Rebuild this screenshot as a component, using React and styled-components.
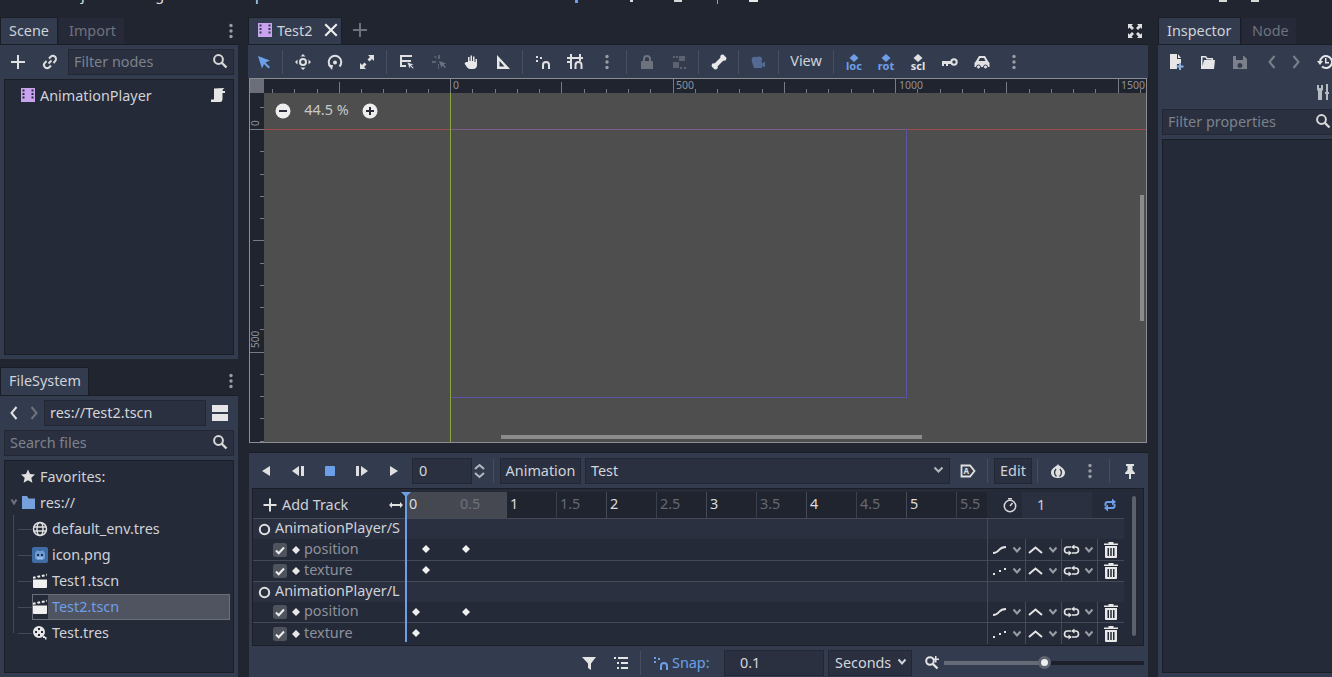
import React from 'react';
import styled, { createGlobalStyle } from 'styled-components';

const GlobalStyle = createGlobalStyle`
  html, body {
    margin: 0;
    padding: 0;
    width: 1332px;
    height: 677px;
    overflow: hidden;
    background: #212530;
    font-family: "Noto Sans", sans-serif;
    font-size: 14.4px;
    color: #d3d6db;
  }
  * { box-sizing: border-box; }
  svg { display: block; flex-shrink: 0; }
`;

const dim = '#7b808a';

/* icon set, 16x16 like the editor's own icons */
const S = ({ w = 16, h = 16, c = '#e0e0e0', children, style }) => (
  <svg width={w} height={h} viewBox={`0 0 ${w} ${h}`} fill={c} stroke="none" style={{ overflow: 'visible', ...style }}>{children}</svg>
);

const Dots = () => (
  <S c="#9a9da4"><circle cx="8" cy="2.5" r="1.7" /><circle cx="8" cy="8" r="1.7" /><circle cx="8" cy="13.5" r="1.7" /></S>
);
const Search = ({ c = '#d8d8d8' }) => (
  <S c={c}><circle cx="6.5" cy="6.5" r="4.4" fill="none" stroke={c} strokeWidth="2" /><path d="M9.5 9.5l5 5" stroke={c} strokeWidth="2.4" /></S>
);
const Plus = ({ c = '#e0e0e0', s = 14 }) => (
  <S c={c}><path d={`M${8 - s / 2} 7h${s}v2h-${s}z M7 ${8 - s / 2}h2v${s}h-2z`} /></S>
);
const Film = () => (
  <S c="#c9a3ee">
    <path fillRule="evenodd" d="M1 1h14v14H1z M2.5 2.5v2h2v-2z M2.5 6v2h2V6z M2.5 9.500v2h2v-2z M11.5 2.5v2h2v-2z M11.5 6v2h2V6z M11.5 9.5v2h2v-2z" />
  </S>
);
const Link = () => (
  <S c="none"><path d="M6.5 9.5l3-3M7 4.5l1.7-1.7a3 3 0 0 1 4.4 4.4L11.5 9M9 11.5l-1.7 1.7a3 3 0 0 1-4.4-4.4L4.5 7" stroke="#dcdcdc" strokeWidth="2" fill="none" /></S>
);
const Script = () => (
  <S c="#e6e6e6"><path d="M4 1.5L14.5 1C13 2 12.5 3 12.5 4H15v2h-2.500v6c0 2-1 3-2.500 3H1v-2.500h3z" /></S>
);
const Star = () => (
  <S c="#e0e0e0"><path d="M8 1.5l2 4.500 5 .5-3.700 3.300 1.100 5L8 12.300 3.600 14.800l1.100-5L1 6.500l5-.5z" /></S>
);
const Folder = () => (
  <S c="#76a0dc"><path d="M2 2h5l1.500 2.500H15V15H2z" /></S>
);
const Globe = () => (
  <S c="none"><g stroke="#e0e0e0" strokeWidth="1.5" fill="none"><circle cx="8" cy="8" r="6.5" /><ellipse cx="8" cy="8" rx="3" ry="6.5" /><path d="M1.5 6h13M1.5 10h13" /></g></S>
);
const PngIcon = () => (
  <S c="#3f6da3">
    <rect width="16" height="16" rx="2" />
    <path d="M4 5l1-2 1.500 1h3L11 3l1 2 1 1v5l-2 2H5l-2-2V6z" fill="#6d9bd6" />
    <rect x="5" y="7" width="2" height="2" fill="#234" /><rect x="9" y="7" width="2" height="2" fill="#234" />
    <rect x="5" y="10.5" width="6" height="1" fill="#cfe0f5" />
  </S>
);
const Scene = () => (
  <S c="#f0f0f0">
    <path d="M1 6.5h14V14a1 1 0 0 1-1 1H2a1 1 0 0 1-1-1z" />
    <path d="M1 3.8L3.200 3.300l.8 1.900-3 .6z M5 2.900l2.700-.6.8 1.900-2.700.6z M9.5 2l2.700-.6.8 1.900-2.700.6z M14 1l1-.2v2.300l-.3 .1z" />
  </S>
);
const Tres = () => (
  <S c="#e6e6e6">
    <path fillRule="evenodd" d="M7 1a6 6 0 1 0 0 12 6 6 0 0 0 0-12z M6 3h2v2H6z M3 6h2v2H3z M9 6h2v2H9z M6 9h2v2H6z" />
    <path d="M11 11h2v1h1.500v2.500H13V13h-2z" />
  </S>
);
const Cursor = () => (
  <S c="#6d9fe8"><path d="M2 2l12 4.500-4.500 2L14 13l-1.500 1.500L8 10l-2 4.500z" /></S>
);
const Move = () => (
  <S c="none"><g fill="#e0e0e0"><path d="M8 0l2.500 2.500h-5zM8 16l-2.500-2.500h5zM0 8l2.500-2.500v5zM16 8l-2.500 2.500v-5z" /></g><circle cx="8" cy="8" r="3" fill="none" stroke="#e0e0e0" strokeWidth="2" /></S>
);
const Rotate = () => (
  <S c="none"><path d="M3.5 12.5a6.300 6.300 0 1 1 9 0" stroke="#e0e0e0" strokeWidth="2" fill="none" /><circle cx="8" cy="8.5" r="2" fill="#e0e0e0" /><path d="M1 11l5 0-1 5z" fill="#e0e0e0" /></S>
);
const Scale = () => (
  <S c="#e0e0e0"><path d="M9 1h6v6l-2-2-2.500 2.500L8.500 5.500 11 3z M7 15H1V9l2 2 2.500-2.500 2 2L5 13z" /></S>
);
const ListSelect = () => (
  <S c="#e0e0e0"><path d="M1 1h12v2H3v3h9v2H3v3h4v2H1z" /><path d="M8 8l7 2.500-2.500 1L15 14l-1 1-2.500-2.500-1 2.500z" stroke="#333c4f" strokeWidth=".6" /></S>
);
const Pivot = () => (
  <S c="#5b6272"><path d="M7 1h2v4H7zM1 7h4v2H1zM7 10h1v5H7zM3 2.500l1-1 2 2-1 1z" /><path d="M8 7l7 2.500-2.500 1L15 13l-1 1-2.500-2.500-1 2.500z" fill="#6c7280" /></S>
);
const Hand = () => (
  <S c="#e8e8e8"><path d="M3 8h2V3h1.500v4h1V1.500H9V7h1V2.500h1.500V8h1V5H14v6c0 2.500-1.500 4-4 4H7c-1.500 0-2.500-1-3.500-2.500L1.500 9.500 3 8z" /></S>
);
const Ruler = () => (
  <S c="#e8e8e8"><path fillRule="evenodd" d="M2 1l13 14H2z M4.5 7v5.500h5z" /></S>
);
const SnapA = ({ c = '#e0e0e0' }) => (
  <S c={c}>
    <path d="M8 15V11a3 3 0 0 1 6 0v4" stroke={c} strokeWidth="2" fill="none" />
    <rect x="1" y="2" width="2" height="2" /><rect x="5" y="3" width="2" height="2" /><rect x="1" y="6" width="2" height="2" />
  </S>
);
const SnapGrid = () => (
  <S c="#e0e0e0"><path d="M3 0h2v3h7V0h2v3h2v2h-2v2h-2V5H5v10H3V9H0V7h3V5H0V3h3z" /><path d="M7.5 15V11a3 3 0 0 1 6 0v4" stroke="#e0e0e0" strokeWidth="2" fill="none" transform="translate(1 0)" /></S>
);
const Lock = ({ c = '#6d727d' }) => (
  <S c={c}><path d="M3 7h10a1 1 0 0 1 1 1v7H2V8a1 1 0 0 1 1-1z" /><path d="M5 7V5a3 3 0 0 1 6 0v2" stroke={c} strokeWidth="2" fill="none" /></S>
);
const GroupIcon = () => (
  <S c="#5d626e"><path d="M2 8h6v6H2zM8 2h6v5H8zM13 13h2v2h-2zM9 13h2v2H9zM2 2h2v2H2zM5 2h2v2H5z" /></S>
);
const Bone = () => (
  <S c="#e8e8e8">
    <path d="M4 12l8-8" stroke="#e8e8e8" strokeWidth="4" />
    <circle cx="11.5" cy="2.8" r="2.2" /><circle cx="13.2" cy="4.5" r="2.2" />
    <circle cx="2.8" cy="11.5" r="2.2" /><circle cx="4.5" cy="13.2" r="2.2" />
  </S>
);
const Camera = () => (
  <S c="#546a94"><circle cx="5" cy="6" r="3.3" /><circle cx="9" cy="5.5" r="3" /><path d="M2 8h10v6H4zM12 9.5l3-2v6l-3-2z" /></S>
);
const KeyTag = ({ label, c }) => (
  <S c={c}>
    <path d="M8 0l4.500 4-4.500 4-4.500-4z" />
    <text x="8" y="16" fontFamily="'Noto Sans', sans-serif" fontWeight="700" fontSize="11" textAnchor="middle" fill={c}>{label}</text>
  </S>
);
const Key = () => (
  <S c="#e0e0e0"><path d="M0 7h9v3H6v2H4v-2H2v2H0z" /><circle cx="12" cy="8" r="2.700" fill="none" stroke="#e0e0e0" strokeWidth="2" /></S>
);
const Car = () => (
  <S c="#e0e0e0"><path fillRule="evenodd" d="M5 2h6l3 5 1.500 2v4h-15V9L2 7z M6 4L4.500 7h7L10 4z" /><circle cx="4.5" cy="13" r="2" stroke="#333c4f" /><circle cx="11.5" cy="13" r="2" stroke="#333c4f" /></S>
);
const Expand = () => (
  <S c="#e0e0e0"><path d="M1 1h5L4.500 2.500 7 5 5 7 2.500 4.500 1 6zM15 1v5l-1.500-1.500L11 7 9 5l2.500-2.500L10 1zM1 15v-5l1.500 1.500L5 9l2 2-2.500 2.500L6 15zM15 15h-5l1.500-1.500L9 11l2-2 2.500 2.500L15 10z" /></S>
);
const Close = () => (
  <S c="#eeeeee"><path d="M3 1.500l5 5 5-5L14.500 3l-5 5 5 5-1.500 1.500-5-5-5 5L1.500 13l5-5-5-5z" /></S>
);
const DocPlus = () => (
  <S c="#e6e6e6"><path d="M2 0h7v5h4v5H9v5H2z M10 0l3 4h-3z" /><path d="M11 9h2v2.500h2.500v2H13V16h-2v-2.500H8.500v-2H11z" fill="#8eb1e3" /></S>
);
const OpenFolder = () => (
  <S c="#e6e6e6"><path fillRule="evenodd" d="M1 2h5l1.500 2H13v2h2l-1 9H1z M2.5 3.500V12l1.500-6h7.500V5.500H6.500L5.500 3.500z" /></S>
);
const Save = () => (
  <S c="#7b808a"><path fillRule="evenodd" d="M1 2h11l3 3v10H1z M4 2v4h7V2z M8 9a2.500 2.500 0 1 0 0 5 2.500 2.500 0 0 0 0-5z" /></S>
);
const History = () => (
  <S c="none"><path d="M3 8a6 6 0 1 1 2 4.500" stroke="#e6e6e6" strokeWidth="2" fill="none" /><path d="M0 7h6l-3 4zM8 4h1.500v4H12v1.500H8z" fill="#e6e6e6" /></S>
);
const Tools = () => (
  <S c="#b6bac1"><path d="M0 1h2v3h2V1h2v5l-1 1v2H1V7L0 6zM1 9h4v7H1zM9 0h2v8h1v2l-1 0v6H9v-6H8V8h1z" /></S>
);
const Chevron = ({ dir = 'left', c = '#e0e0e0' }) => (
  <S c="none" w={10} h={16}>
    <path d={dir === 'left' ? 'M7.5 2L2.5 8l5 6' : 'M2.5 2l5 6-5 6'} stroke={c} strokeWidth="2" fill="none" />
  </S>
);
const SplitView = () => (
  <S c="#e6e6e6"><path d="M0 0h16v7H0zM0 9h16v7H0z" /></S>
);
const Down = ({ c = '#9a9da4', w = 10 }) => (
  <S c="none" w={w} h={8}><path d={`M1.5 1.5L${w / 2} 5.5l${w / 2 - 1.5}-4`} stroke={c} strokeWidth="2" fill="none" /></S>
);
const PlayBack = () => (<S c="#e0e0e0"><path d="M12 3v10L4 8z" /></S>);
const PlayBackStep = () => (<S c="#e0e0e0"><path d="M9 3v10L2 8zM11 3h3v10h-3z" /></S>);
const Stop = () => (<S c="#6d9fe8"><rect x="3" y="3" width="10" height="10" rx="1" /></S>);
const PlayStep = () => (<S c="#e0e0e0"><path d="M7 3v10l7-5zM2 3h3v10H2z" /></S>);
const Play = () => (<S c="#e0e0e0"><path d="M4 3v10l8-5z" /></S>);
const UpDown = () => (
  <S c="none"><path d="M3 6l4.500-4 4.500 4M3 10l4.500 4 4.500-4" stroke="#b5b8bf" strokeWidth="2" fill="none" /></S>
);
const AutoTag = () => (
  <S c="none"><path d="M1.5 2.5h8.500l4.500 5.500-4.500 5.500H1.500z" stroke="#e0e0e0" strokeWidth="1.8" fill="none" /><text x="3.5" y="11" fontSize="8" fontWeight="700" fontFamily="'Noto Sans', sans-serif" fill="#e0e0e0">A</text></S>
);
const Onion = () => (
  <S c="#e0e0e0">
    <path d="M8 1c1 2.500 7 4 7 8.500S11 15 8 15 1 14 1 9.500 7 3.500 8 1z" />
    <path d="M6 6C4 8.500 4 11 6.500 13.500M10 6c2 2.500 2 5-.5 7.500" stroke="#333c4f" strokeWidth="1.3" fill="none" />
  </S>
);
const Pin = () => (
  <S c="#e0e0e0"><path d="M4 1h8v2h-1.500v4L13 10v1H3v-1l2.500-3V3H4zM7 11h2v5H7z" /></S>
);
const ResizeH = () => (
  <S c="#e0e0e0" w={14} h={8}><path d="M0 4l3-3v2h8V1l3 3-3 3V5H3v2z" /></S>
);
const Timer = () => (
  <S c="none"><circle cx="8" cy="9" r="5.7" stroke="#d8d8d8" strokeWidth="1.5" fill="none" /><path d="M8 9l2.500-3" stroke="#d8d8d8" strokeWidth="1.5" /><path d="M6 1h4v1.500H6z" fill="#d8d8d8" /></S>
);
const Loop = ({ c = '#6d9fe8' }) => (
  <S c={c}>
    <path d="M2.5 9V7a3 3 0 0 1 3-3H10V1.500L14 5l-4 3.500V6H5.500c-.6 0-1 .4-1 1v2z" />
    <path d="M13.5 7v2a3 3 0 0 1-3 3H6v2.500L2 11l4-3.500V10h4.500c.6 0 1-.4 1-1V7z" />
  </S>
);
const Check = () => (
  <S c="none" w={14} h={14}>
    <rect width="14" height="14" rx="2.5" fill="#4f535d" />
    <path d="M3 7.5l2.700 2.700L11 4.500" stroke="#eeeeee" strokeWidth="2" fill="none" />
  </S>
);
const Ring = () => (
  <S c="none" w={13} h={13}><circle cx="6.5" cy="6.5" r="4.7" stroke="#e0e0e0" strokeWidth="2" fill="none" /></S>
);
const Diamond = ({ c = '#e8e8e8' }) => (
  <S c={c} w={8} h={8}><path d="M4 0L8 4 4 8 0 4z" /></S>
);
const Linear = () => (
  <S c="none" w={15} h={10}><path d="M1 8c3 0 4-.5 6-3s4-3 7-3" stroke="#e4e4e4" strokeWidth="2" fill="none" /></S>
);
const Nearest = () => (
  <S c="#e4e4e4" w={15} h={10}><rect x="1" y="7" width="2" height="2" /><rect x="7" y="4" width="2" height="2" /><rect x="12" y="2" width="2" height="2" /></S>
);
const Caret = () => (
  <S c="none" w={15} h={10}><path d="M1 8l6.500-5.500L14 8" stroke="#e4e4e4" strokeWidth="2" fill="none" /></S>
);
const Wrap = () => (
  <S c="#e4e4e4" w={15} h={10}>
    <path d="M7 2H3.500a3 3 0 0 0 0 6H5M8 8h3.500a3 3 0 0 0 0-6H10" stroke="#e4e4e4" strokeWidth="1.6" fill="none" />
    <path d="M10.500 -.5L7 2l3.500 2.500zM4.500 5.500L8 8l-3.500 2.500z" />
  </S>
);
const Trash = () => (
  <S c="#e8e8e8"><path fillRule="evenodd" d="M5.500 0h5v1.500H15V3H1V1.500h4.500z M2 4h12v11a1 1 0 0 1-1 1H3a1 1 0 0 1-1-1z M4.500 6v8h1.500V6z M7.250 6v8h1.500V6z M10 6v8h1.500V6z" /></S>
);
const Filter = () => (
  <S c="#e4e4e4"><path d="M1 2h14L10 8.500V15l-3-2V8.500z" /></S>
);
const ListIcon = () => (
  <S c="#e4e4e4"><path d="M1 2h2v2H1zM5 2h10v2H5zM4 7h2v2H4zM8 7h7v2H8zM4 12h2v2H4zM8 12h7v2H8z" /></S>
);
const ZoomKey = () => (
  <S c="none"><circle cx="6" cy="6" r="3.8" stroke="#e4e4e4" strokeWidth="2" fill="none" /><path d="M9 9l4.500 4.500" stroke="#e4e4e4" strokeWidth="2.4" /><path d="M11 1h1.500v2.500H15V5h-2.500v2.500H11V5H9V3.500h2z" fill="#e4e4e4" /></S>
);
const CircleBtn = ({ plus }) => (
  <S c="none">
    <circle cx="8" cy="8" r="7.5" fill="#eeeeee" />
    <path d="M4 7h8v2H4z" fill="#2b2f3a" />
    {plus && <path d="M7 4h2v8H7z" fill="#2b2f3a" />}
  </S>
);
/* what peeks out of the clipped top toolbar */
const TopBits = styled.svg`
  position: absolute;
  left: 0;
  top: 0;
`;

/* shell */
const Page = styled.div`
  width: 1332px;
  height: 677px;
  display: flex;
  flex-direction: column;
  overflow: hidden;
`;
const MenuStrip = styled.div`
  height: 17px;
  flex: none;
  overflow: hidden;
  display: flex;
  align-items: flex-end;
  position: relative;
`;
const MenuInner = styled.div`
  display: flex;
  align-items: center;
  height: 32px;
  margin-bottom: 7px;
  padding-left: 4px;
  gap: 14px;
  width: 100%;
  flex: none;
  color: #e0e0e0;
`;
const Columns = styled.div`
  flex: 1;
  min-height: 0;
  display: grid;
  grid-template-columns: 238px 900px 174px;
  column-gap: 10px;
`;
const Dock = styled.div`
  display: flex;
  flex-direction: column;
  min-height: 0;
  min-width: 0;
  flex: ${p => p.$grow ? 1 : 'none'};
  height: ${p => p.$h ? p.$h + 'px' : 'auto'};
  overflow: hidden;
`;
const Stack = styled.div`
  display: flex;
  flex-direction: column;
  gap: ${p => p.$gap || 0}px;
  min-height: 0;
`;
const TabBar = styled.div`
  height: ${p => p.$h || 27}px;
  flex: none;
  display: flex;
  align-items: stretch;
  gap: 1px;
`;
const Tab = styled.div`
  padding: 0 ${p => p.$padR ?? (p.$on ? 8 : 10)}px 2px ${p => p.$on ? 8 : 10}px;
  display: flex;
  align-items: center;
  gap: 4px;
  width: ${p => p.$w}px;
  white-space: nowrap;
  background: ${p => p.$on ? '#333c4f' : '#262a38'};
  color: ${p => p.$on ? '#cfd2d8' : '#6e727d'};
  border-top: ${p => p.$on ? '1px solid #1b1e27' : '0'};
  border-left: ${p => p.$on ? '1px solid #1b1e27' : '0'};
  border-right: ${p => p.$on ? '1px solid #1b1e27' : '0'};
  margin-top: ${p => p.$on ? 0 : 1}px;
`;
const TabMenu = styled.div`
  margin-left: auto;
  align-self: center;
  margin-right: -1px;
`;
const Panel = styled.div`
  flex: 1;
  min-height: 0;
  background: #333c4f;
  border-top: 1px solid #1b1e27;
  padding: 4px;
  display: flex;
  flex-direction: column;
  gap: 4px;
`;
const Row = styled.div`
  display: flex;
  align-items: center;
  gap: ${p => p.$gap || 0}px;
  flex: none;
  height: 26px;
  padding: ${p => p.$pad || 0};
  justify-content: ${p => p.$end ? 'flex-end' : 'flex-start'};
`;
const Input = styled.div`
  flex: ${p => p.$w ? 'none' : p.$block ? 'none' : 1};
  width: ${p => p.$w ? p.$w + 'px' : 'auto'};
  height: 26px;
  background: #2a3040;
  border: 1px solid #232733;
  display: flex;
  align-items: center;
  justify-content: space-between;
  padding: 0 ${p => p.$pad || 5}px 2px;
  color: ${p => p.$muted ? '#7d828c' : '#d3d6db'};
  white-space: nowrap;
  min-width: 0;
`;
const InspectorFilter = styled(Input)`
  margin-right: -8px;
  padding-right: 4px;
`;
const InspectorTools = styled(Row)`
  width: 200px;
`;
const InspectorHelper = styled(Row)`
  margin-right: -5px;
`;
const Tree = styled.div`
  flex: 1;
  min-height: 0;
  background: #252a38;
  border: 1px solid #1b1e27;
  padding: 3px 0;
  margin-right: ${p => p.$flush ? -8 : 0}px;
  overflow: hidden;
`;
const Node = styled.div`
  height: 26px;
  display: flex;
  align-items: center;
  gap: 4px;
  padding: 0 0 2px ${p => p.$indent}px;
  color: #cfd2d8;
  white-space: nowrap;
`;
const FileRow = styled(Node)`
  position: relative;
  margin-right: 3px;
  margin-left: ${p => p.$indent}px;
  padding-left: 0;
  background: ${p => p.$sel ? '#4f5460' : 'transparent'};
  outline: ${p => p.$sel ? '1px solid #6a6e78' : '0'};
  outline-offset: -1px;
  color: ${p => p.$sel ? '#6d9fe8' : '#cfd2d8'};
  &::before {
    content: '';
    position: absolute;
    left: -14px;
    width: 14px;
    top: 13px;
    height: 1px;
    background: #454a58;
  }
`;
const FileIcon = styled.div`
  width: 16px;
  height: 24px;
  margin-bottom: -2px;
  display: flex;
  align-items: center;
  flex: none;
  background: ${p => p.$sel ? '#252a38' : 'transparent'};
`;
const FileList = styled.div`
  position: relative;
  &::before {
    content: '';
    position: absolute;
    left: 8px;
    top: -1px;
    bottom: 13px;
    width: 1px;
    background: #454a58;
  }
`;
const IconSlot = styled.div`
  width: ${p => p.$w || 16}px;
  height: 16px;
  display: flex;
  align-items: center;
  justify-content: center;
  flex: none;
  margin: ${p => p.$m || 0};
`;
const Push = styled.div`
  margin-left: auto;
  margin-right: ${p => p.$r || 0}px;
`;
const Centered = styled(Push)`
  align-self: center;
`;

/* center column */
const Center = styled.div`
  display: flex;
  flex-direction: column;
  min-height: 0;
  min-width: 0;
`;
const ViewTools = styled.div`
  height: 34px;
  flex: none;
  background: #333c4f;
  border-top: 1px solid #1b1e27;
  display: flex;
  align-items: center;
`;
const ToolBtn = styled.div`
  width: ${p => p.$w || 32}px;
  height: 24px;
  display: flex;
  align-items: center;
  justify-content: center;
  flex: none;
  color: #cfd2d8;
`;
const ViewLabel = styled.span`
  padding-bottom: 3px;
`;
const VSep = styled.div`
  width: 1px;
  height: 24px;
  margin: 0 ${p => p.$r ?? 4}px 0 ${p => p.$l ?? 3}px;
  background: #474e60;
  flex: none;
`;
const Viewport = styled.div`
  height: 365px;
  flex: none;
  margin: 0 1px;
  position: relative;
  overflow: hidden;
  background: #4e4e4e;
  border: 1px solid #8a8d93;
`;
const RulerSvg = styled.svg`
  position: absolute;
  left: 0;
  top: ${p => p.$top || 0}px;
`;
const Guide = styled.div`
  position: absolute;
  left: ${p => p.$x}px;
  top: ${p => p.$y}px;
  width: ${p => p.$w}px;
  height: ${p => p.$h}px;
  background: ${p => p.$c};
`;
const ZoomBar = styled.div`
  position: absolute;
  left: 25px;
  top: 21px;
  display: flex;
  align-items: center;
  color: #c8c8c8;
`;
const ZoomText = styled.span`
  width: 71px;
  text-align: center;
  padding-bottom: 2px;
`;
const Gap = styled.div`
  height: 9px;
  flex: none;
`;
const AnimPanel = styled.div`
  flex: 1;
  min-height: 0;
  background: #333c4f;
  border-top: 1px solid #1b1e27;
  display: flex;
  flex-direction: column;
  margin-left: 1px;
`;
const AnimBar = styled.div`
  height: 35px;
  padding: 5px 0 4px 1px;
  flex: none;
  display: flex;
  align-items: center;
`;
const Edit = styled.div`
  height: 26px;
  width: ${p => p.$w}px;
  padding: 0 0 2px;
  display: flex;
  align-items: center;
  justify-content: center;
  background: #2a3040;
  border: 1px solid #232733;
  color: #cfd2d8;
  flex: none;
  white-space: nowrap;
`;
const TrackBox = styled.div`
  height: 158px;
  flex: none;
  margin: 0 0 0 3px;
  background: #252a38;
  border: 1px solid #1b1e27;
  position: relative;
  overflow: hidden;
  padding-top: 3px;
  width: 892px;
`;
const Header = styled.div`
  height: 27px;
  width: 871px;
  display: flex;
  border-bottom: 1px solid #454a58;
`;
const HeadName = styled.div`
  width: 153px;
  flex: none;
  display: flex;
  align-items: center;
  padding: 0 0 1px 9px;
  gap: 4px;
  color: #cfd2d8;
`;
const Timeline = styled.div`
  width: 581px;
  flex: none;
  display: flex;
  position: relative;
  background: linear-gradient(to right, #454851 0, #454851 100px, #20242f 100px);
`;
const TimeMark = styled.div`
  width: 50px;
  flex: none;
  height: 100%;
  border-left: ${p => p.$first ? 0 : '1px solid #454a58'};
  padding: 0 0 3px 3px;
  display: flex;
  align-items: center;
  color: ${p => p.$half ? dim : '#dcdcdc'};
  ${p => p.$half && 'opacity: .75;'}
`;
const HeadEnd = styled.div`
  flex: 1;
  display: flex;
  align-items: center;
  padding-left: 15px;
  gap: 4px;
`;
const TimeField = styled.div`
  width: 70px;
  height: 26px;
  background: #2a3040;
  display: flex;
  align-items: center;
  padding: 0 0 2px 15px;
  margin-right: 6px;
  color: #cfd2d8;
`;
const Scroll = styled.div`
  position: absolute;
  right: 7px;
  top: 7px;
  width: 4px;
  height: 140px;
  border-radius: 2px;
  background: #5c616c;
`;
const Playhead = styled.div`
  position: absolute;
  left: 152px;
  top: 3px;
  bottom: 3px;
  width: 2px;
  background: #6d9fe8;
  &::before {
    content: '';
    position: absolute;
    top: 0;
    left: -4px;
    border: 5px solid transparent;
    border-top-color: #6d9fe8;
  }
`;
const TrackRow = styled.div`
  width: 871px;
  height: ${p => p.$h}px;
  display: flex;
  background: ${p => p.$group ? '#2b3040' : 'transparent'};
  border-bottom: ${p => p.$line ? '1px solid #454a58' : 0};
`;
const TrackName = styled.div`
  width: 153px;
  flex: none;
  display: flex;
  align-items: center;
  white-space: nowrap;
  overflow: hidden;
  padding-left: ${p => p.$group ? 5 : 20}px;
  gap: ${p => p.$group ? 4 : 5}px;
  color: ${p => p.$group ? '#cfd2d8' : '#8d919b'};
`;
const TrackLabel = styled.span`
  margin: -3px 0 0 ${p => p.$group ? 0 : -1}px;
`;
const Keys = styled.div`
  width: 581px;
  flex: none;
  position: relative;
`;
const KeyDot = styled.div`
  position: absolute;
  left: ${p => p.$x - 4}px;
  top: ${p => p.$y}px;
`;
const Controls = styled.div`
  flex: 1;
  display: flex;
  border-left: 1px solid #454a58;
`;
const Cell = styled.div`
  width: ${p => p.$w}px;
  flex: none;
  display: flex;
  align-items: center;
  justify-content: ${p => p.$center ? 'center' : 'flex-start'};
  padding-left: ${p => p.$pad || 0}px;
  gap: 5px;
  border-right: ${p => p.$line ? '1px solid #454a58' : 0};
`;
const Footer = styled.div`
  flex: 1;
  display: flex;
  align-items: center;
  padding: 3px 0 0 324px;
`;
const SnapLabel = styled.div`
  color: #6d9fe8;
  margin-left: 3px;
  padding-bottom: 2px;
  width: 52px;
  flex: none;
`;
const Select = styled(Input)`
  margin-left: 4px;
  padding: 0 4px 2px 6px;
`;
const Slider = styled.div`
  width: 200px;
  height: 4px;
  flex: none;
  background: linear-gradient(to right, #666b77 50%, #1d202a 50%);
  position: relative;
`;
const Grabber = styled.div`
  position: absolute;
  left: 94px;
  top: -5px;
  width: 13px;
  height: 13px;
  border-radius: 50%;
  background: #eeeeee;
  border: 3px solid #5f6570;
`;

const TopRuler = () => {
  const ticks = [];
  for (let i = -8; i < 32; i++) {
    const x = 200 + i * 22.25;
    if (x < 14) continue;
    const y = i % 10 === 0 ? 0 : i % 5 === 0 ? 3 : 10;
    ticks.push(<rect key={i} x={Math.round(x)} y={y} width="1" height={14 - y} fill="#777b85" />);
  }
  return (
    <RulerSvg width="896" height="14">
      <rect width="896" height="14" fill="#20242f" />
      <rect width="14" height="14" fill="#6c6f78" />
      {ticks}
      {[[203, '0'], [426, '500'], [649, '1000'], [871, '1500']].map(([x, t]) => (
        <text key={t} x={x} y="10" fontSize="10.5" fontFamily="'Noto Sans', sans-serif" fill="#8f929a">{t}</text>
      ))}
    </RulerSvg>
  );
};
const LeftRuler = () => {
  const ticks = [];
  for (let i = -1; i < 15; i++) {
    const y = 36 + i * 22.25;
    const x = i % 10 === 0 ? 0 : i % 5 === 0 ? 3 : 10;
    ticks.push(<rect key={i} x={x} y={Math.round(y)} width={14 - x} height="1" fill="#777b85" />);
  }
  return (
    <RulerSvg width="14" height="350" $top={14}>
      <rect width="14" height="350" fill="#20242f" />
      {[[33, '0'], [255, '500']].map(([y, t]) => (
        <text key={t} x="0" y="0" transform={`translate(9 ${y}) rotate(-90)`} fontSize="10" fontFamily="'Noto Sans', sans-serif" fill="#8f929a">{t}</text>
      ))}
      {ticks}
    </RulerSvg>
  );
};

const TIMES = ['0', '0.5', '1', '1.5', '2', '2.5', '3', '3.5', '4', '4.5', '5', '5.5'];

const TRACKS = [
  { group: 'AnimationPlayer/S' },
  { name: 'position', keys: [20, 60], keyY: 6, curve: 'linear', line: true, h: 22 },
  { name: 'texture', keys: [20], keyY: 5, curve: 'nearest', line: true, h: 21 },
  { group: 'AnimationPlayer/L' },
  { name: 'position', keys: [10, 60], keyY: 6, curve: 'linear', line: true, h: 21 },
  { name: 'texture', keys: [10], keyY: 6, curve: 'nearest', h: 21 },
];

const Track = ({ t }) => {
  if (t.group) {
    return (
      <TrackRow $h={20} $group>
        <TrackName $group><Ring /><TrackLabel $group>{t.group}</TrackLabel></TrackName>
        <Keys />
        <Controls />
      </TrackRow>
    );
  }
  return (
    <TrackRow $h={t.h} $line={t.line}>
      <TrackName><Check /><Diamond /><TrackLabel>{t.name}</TrackLabel></TrackName>
      <Keys>{t.keys.map(k => <KeyDot key={k} $x={k} $y={t.keyY}><Diamond c="#f0f0f0" /></KeyDot>)}</Keys>
      <Controls>
        <Cell $w={38} $pad={3} $line>
          <IconSlot>{t.curve === 'linear' ? <Linear /> : <Nearest />}</IconSlot>
          <Down />
        </Cell>
        <Cell $w={36} $pad={1} $line><IconSlot><Caret /></IconSlot><Down /></Cell>
        <Cell $w={36} $pad={1} $line><IconSlot><Wrap /></IconSlot><Down /></Cell>
        <Cell $w={26} $center><Trash /></Cell>
      </Controls>
    </TrackRow>
  );
};

export default function App() {
  return (
    <Page>
      <GlobalStyle />
      <MenuStrip>
        <MenuInner>
          <span>Scene</span><span>Project</span><span>Debug</span><span>Editor</span><span>Help</span>
        </MenuInner>
        <TopBits width="1332" height="6">
          <rect x="575" width="3" height="3" fill="#6d9fe8" />
          <rect x="630" width="3" height="2" fill="#d8d8d8" />
          <rect x="674" width="8" height="2" fill="#d8d8d8" />
          <rect x="717" width="1" height="4" fill="#9a9da4" />
          <rect x="749" width="9" height="2" fill="#e8e8e8" />
          <rect x="1219" width="8" height="2" fill="#d8d8d8" />
          <rect x="1251" width="8" height="2" fill="#d8d8d8" />
        </TopBits>
      </MenuStrip>
      <Columns>
        <Stack $gap={8}>
          <Dock $h={342}>
            <TabBar>
              <Tab $on $w={58}>Scene</Tab>
              <Tab $w={65}>Import</Tab>
              <TabMenu><Dots /></TabMenu>
            </TabBar>
            <Panel>
              <Row>
                <IconSlot $w={28}><Plus /></IconSlot>
                <IconSlot $w={36}><Link /></IconSlot>
                <Input $muted>Filter nodes<Search /></Input>
              </Row>
              <Tree>
                <Node $indent={15}><Film /><span>AnimationPlayer</span><Push $r={7}><Script /></Push></Node>
              </Tree>
            </Panel>
          </Dock>
          <Dock $grow>
            <TabBar $h={28}>
              <Tab $on $w={89}>FileSystem</Tab>
              <TabMenu><Dots /></TabMenu>
            </TabBar>
            <Panel>
              <Row>
                <IconSlot $w={20}><Chevron /></IconSlot>
                <IconSlot $w={20}><Chevron dir="right" c="#6e727d" /></IconSlot>
                <Input $w={162}>res://Test2.tscn</Input>
                <IconSlot $w={28}><SplitView /></IconSlot>
              </Row>
              <Input $muted $block>Search files<Search /></Input>
              <Tree>
                <Node $indent={15}><Star /><span>Favorites:</span></Node>
                <Node $indent={5}>
                  <IconSlot $w={8} $m="0 -2px 0 0"><Down c="#6e727d" w={8} /></IconSlot>
                  <Folder /><span>res://</span>
                </Node>
                <FileList>
                  <FileRow $indent={27}><FileIcon><Globe /></FileIcon>default_env.tres</FileRow>
                  <FileRow $indent={27}><FileIcon><PngIcon /></FileIcon>icon.png</FileRow>
                  <FileRow $indent={27}><FileIcon><Scene /></FileIcon>Test1.tscn</FileRow>
                  <FileRow $indent={27} $sel><FileIcon $sel><Scene /></FileIcon>Test2.tscn</FileRow>
                  <FileRow $indent={27}><FileIcon><Tres /></FileIcon>Test.tres</FileRow>
                </FileList>
              </Tree>
            </Panel>
          </Dock>
        </Stack>

        <Center>
          <TabBar>
            <Tab $on $w={94} $padR={2}><Film />Test2<Push><Close /></Push></Tab>
            <IconSlot $w={34} $m="5px 0 0 0"><Plus c="#6e727d" /></IconSlot>
            <Centered $r={5}><Expand /></Centered>
          </TabBar>
          <ViewTools>
            <ToolBtn $w={31}><Cursor /></ToolBtn>
            <VSep />
            <ToolBtn><Move /></ToolBtn>
            <ToolBtn><Rotate /></ToolBtn>
            <ToolBtn><Scale /></ToolBtn>
            <VSep />
            <ToolBtn><ListSelect /></ToolBtn>
            <ToolBtn><Pivot /></ToolBtn>
            <ToolBtn><Hand /></ToolBtn>
            <ToolBtn><Ruler /></ToolBtn>
            <VSep />
            <ToolBtn><SnapA /></ToolBtn>
            <ToolBtn><SnapGrid /></ToolBtn>
            <ToolBtn><Dots /></ToolBtn>
            <VSep />
            <ToolBtn><Lock /></ToolBtn>
            <ToolBtn><GroupIcon /></ToolBtn>
            <VSep />
            <ToolBtn><Bone /></ToolBtn>
            <VSep />
            <ToolBtn $w={30}><Camera /></ToolBtn>
            <VSep $l={5} />
            <ToolBtn $w={46}><ViewLabel>View</ViewLabel></ToolBtn>
            <VSep $l={4} />
            <ToolBtn><KeyTag label="loc" c="#6d9fe8" /></ToolBtn>
            <ToolBtn><KeyTag label="rot" c="#6d9fe8" /></ToolBtn>
            <ToolBtn><KeyTag label="scl" c="#e0e0e0" /></ToolBtn>
            <ToolBtn><Key /></ToolBtn>
            <ToolBtn><Car /></ToolBtn>
            <ToolBtn><Dots /></ToolBtn>
          </ViewTools>
          <Viewport>
            <Guide $x={14} $y={50} $w={186} $h={1} $c="#a04a4a" />
            <Guide $x={657} $y={50} $w={240} $h={1} $c="#a04a4a" />
            <Guide $x={200} $y={50} $w={456} $h={1} $c="#7d5a8a" />
            <Guide $x={656} $y={50} $w={1} $h={268} $c="#5a55a8" />
            <Guide $x={200} $y={318} $w={457} $h={1} $c="#5a55a8" />
            <Guide $x={200} $y={14} $w={1} $h={349} $c="#86a83c" />
            <TopRuler />
            <LeftRuler />
            <ZoomBar><CircleBtn /><ZoomText>44.5 %</ZoomText><CircleBtn plus /></ZoomBar>
            <Guide $x={890} $y={116} $w={4} $h={126} $c="#8b8b8b" />
            <Guide $x={251} $y={356} $w={421} $h={4} $c="#8b8b8b" />
          </Viewport>
          <Gap />
          <AnimPanel>
            <AnimBar>
              <ToolBtn><PlayBack /></ToolBtn>
              <ToolBtn><PlayBackStep /></ToolBtn>
              <ToolBtn><Stop /></ToolBtn>
              <ToolBtn><PlayStep /></ToolBtn>
              <ToolBtn><Play /></ToolBtn>
              <Input $w={60} $pad={6} style={{ marginLeft: 2 }}>0</Input>
              <IconSlot><UpDown /></IconSlot>
              <VSep $l={5} $r={6} />
              <Edit $w={81}>Animation</Edit>
              <Input $w={365} $pad={5} style={{ marginLeft: 4 }}>Test<Down c="#b5b8bf" w={11} /></Input>
              <IconSlot $w={36}><AutoTag /></IconSlot>
              <VSep $l={1} $r={6} />
              <Edit $w={38}>Edit</Edit>
              <VSep $l={5} $r={0} />
              <ToolBtn $w={40}><Onion /></ToolBtn>
              <ToolBtn $w={24}><Dots /></ToolBtn>
              <VSep $l={7} $r={7} />
              <ToolBtn $w={26}><Pin /></ToolBtn>
            </AnimBar>
            <TrackBox>
              <Header>
                <HeadName><Plus s={13} /><span>Add Track</span><Push $r={3}><ResizeH /></Push></HeadName>
                <Timeline>
                  {TIMES.map((t, i) => <TimeMark key={t} $first={i === 0} $half={i % 2 === 1}>{t}</TimeMark>)}
                </Timeline>
                <HeadEnd><Timer /><TimeField>1</TimeField><Loop /></HeadEnd>
              </Header>
              {TRACKS.map((t, i) => <Track key={i} t={t} />)}
              <Scroll />
              <Playhead />
            </TrackBox>
            <Footer>
              <ToolBtn><Filter /></ToolBtn>
              <ToolBtn><ListIcon /></ToolBtn>
              <VSep />
              <IconSlot $m="0 0 0 8px"><SnapA c="#6d9fe8" /></IconSlot>
              <SnapLabel>Snap:</SnapLabel>
              <Input $w={100} $pad={15}><span>0.1</span></Input>
              <Select $w={84}>Seconds<Down c="#cfd2d8" /></Select>
              <ToolBtn $w={24} style={{ marginLeft: 8 }}><ZoomKey /></ToolBtn>
              <Slider><Grabber /></Slider>
            </Footer>
          </AnimPanel>
        </Center>

        <Dock>
          <TabBar>
            <Tab $on $w={83}>Inspector</Tab>
            <Tab $w={54}>Node</Tab>
          </TabBar>
          <Panel>
            <InspectorTools $pad="0 0 0 6px" $gap={16}>
              <DocPlus /><OpenFolder /><Save />
              <IconSlot $w={10} $m="0 0 0 3px"><Chevron c="#7b808a" /></IconSlot>
              <IconSlot $w={10} $m="0 0 0 -2px"><Chevron dir="right" c="#7b808a" /></IconSlot>
              <History />
            </InspectorTools>
            <InspectorHelper $end><Tools /></InspectorHelper>
            <InspectorFilter $muted $block>Filter properties<Search /></InspectorFilter>
            <Tree $flush />
          </Panel>
        </Dock>
      </Columns>
    </Page>
  );
}
